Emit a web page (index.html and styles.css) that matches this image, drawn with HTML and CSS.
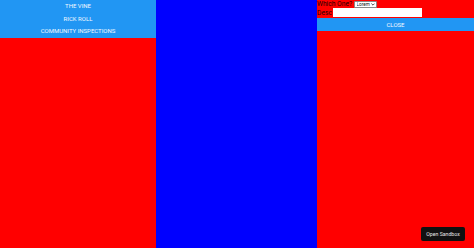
FILE: index.html
```html
<!DOCTYPE html>
<html>
<head>
<meta charset="utf-8">
<link rel="stylesheet" href="styles.css">
</head>
<body>
<div class="app">
  <div class="col col-left">
    <nav class="menu">
      <a class="menu-link">THE VINE</a>
      <a class="menu-link">RICK ROLL</a>
      <a class="menu-link">COMMUNITY INSPECTIONS</a>
    </nav>
  </div>
  <div class="col col-mid"></div>
  <div class="col col-right">
    <div class="field">
      <label class="field-label">Which One?</label>
      <span class="picker-wrap">
        <select class="picker"><option>Lorem</option></select>
        <svg class="picker-arrow" viewBox="0 0 6 4" width="4" height="3"><path d="M0.6 0.6 L3 3 L5.4 0.6" fill="none" stroke="#222" stroke-width="1.2"/></svg>
      </span>
    </div>
    <div class="field">
      <label class="field-label">Desc</label>
      <input class="desc" type="text">
    </div>
    <button class="close-btn">CLOSE</button>
  </div>
</div>
<button class="sandbox-btn">Open Sandbox</button>
</body>
</html>
```
FILE: styles.css
```css
html, body {
  margin: 0;
  padding: 0;
  height: 100%;
}
body {
  font-family: Roboto, "Liberation Sans", Arial, sans-serif;
  overflow: hidden;
}
.app {
  display: grid;
  grid-template-columns: 156px 161px 157px;
  height: 248px;
}
.col-left, .col-right {
  background: #ff0000;
}
.col-mid {
  background: #0000ff;
}
.menu {
  background: #2196f3;
  height: 38px;
  display: flex;
  flex-direction: column;
  justify-content: center;
}
.menu-link {
  display: block;
  text-align: center;
  color: #f4f8ff;
  font-size: 6px;
  line-height: 12.8px;
}
.col-right {
  display: flex;
  flex-direction: column;
  align-items: flex-start;
}
.field {
  display: flex;
  align-items: center;
  height: 8.5px;
}
.field-label {
  font-size: 6.7px;
  color: #220000;
  line-height: 8.5px;
}
.picker-wrap {
  position: relative;
  margin-left: 1.5px;
  display: flex;
}
.picker {
  appearance: none;
  -webkit-appearance: none;
  font-size: 4.6px;
  height: 7.5px;
  width: 23px;
  padding: 0 0 0 2px;
  border: 0.5px solid #888;
  border-radius: 1px;
  background: #fff;
  color: #111;
  font-family: inherit;
  line-height: 6.5px;
}
.picker-arrow {
  position: absolute;
  right: 2px;
  top: 2.3px;
  pointer-events: none;
}
.desc {
  margin-left: 1px;
  width: 89px;
  height: 9px;
  box-sizing: border-box;
  border: none;
  padding: 0;
  background: #fff;
}
.close-btn {
  margin-top: 0.5px;
  width: 100%;
  height: 13px;
  border: none;
  background: #2196f3;
  color: #f4f8ff;
  font-family: inherit;
  font-size: 6px;
  padding: 0;
}
.sandbox-btn {
  position: absolute;
  right: 9px;
  bottom: 7px;
  width: 44px;
  height: 14px;
  padding: 0;
  border: none;
  border-radius: 2px;
  background: #111111;
  color: #e8e8e8;
  font-family: inherit;
  font-size: 5.2px;
}
```
